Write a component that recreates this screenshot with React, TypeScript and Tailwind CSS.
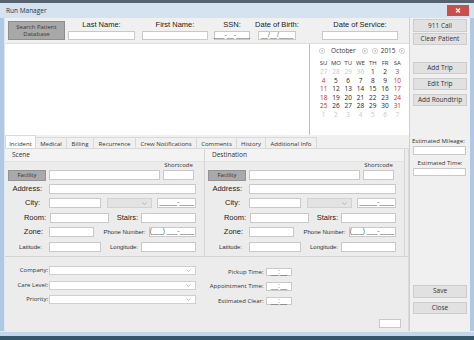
import React from "react";

const LS = "font-['Liberation_Sans',Arial,sans-serif]";
const OS = "font-['Open_Sans',sans-serif]";

function Input({ className = "", text }: { className?: string; text?: string }) {
  return (
    <div className={`bg-white border border-[#c9c9c9] flex items-start justify-center ${className}`}>
      {text ? <span className={`${LS} text-[6.5px] leading-[6px] text-[#555] whitespace-pre`}>{text}</span> : null}
    </div>
  );
}

function Chevron() {
  return (
    <svg width="5" height="3" viewBox="0 0 5 3">
      <path d="M0.5 0.5 L2.5 2.5 L4.5 0.5" stroke="#a8a8a8" fill="none" strokeWidth="0.8" />
    </svg>
  );
}

function Select({ className = "", disabled = false }: { className?: string; disabled?: boolean }) {
  return (
    <div
      className={`border flex items-center justify-end pr-[4px] ${disabled ? "bg-[#e3e3e3] border-[#d2d2d2]" : "bg-white border-[#cfcfcf]"} ${className}`}
    >
      <Chevron />
    </div>
  );
}

function Btn({ children, className = "" }: { children: React.ReactNode; className?: string }) {
  return (
    <div className={`bg-[#e1e1e1] border border-[#cdcdcd] flex items-center justify-center ${OS} text-[6.5px] text-[#333] ${className}`}>
      {children}
    </div>
  );
}

function Arrow({ dir }: { dir: "l" | "r" }) {
  return (
    <svg width="6" height="6" viewBox="0 0 6 6">
      <circle cx="3" cy="3" r="2.6" stroke="#b0b0b0" strokeWidth="0.6" fill="none" />
      {dir === "l" ? (
        <path d="M3.6 1.9 L2.2 3 L3.6 4.1 Z" fill="#888" />
      ) : (
        <path d="M2.4 1.9 L3.8 3 L2.4 4.1 Z" fill="#888" />
      )}
    </svg>
  );
}

function HeaderField({ label, className, text }: { label: string; className: string; text?: string }) {
  return (
    <div className={`flex flex-col items-center pt-[1px] ${className}`}>
      <div className={`${LS} text-[7.5px] leading-[11px] h-[11px] text-[#222] whitespace-nowrap`}>{label}</div>
      <Input className="mt-[1px] h-[9px] w-full" text={text} />
    </div>
  );
}

function Calendar() {
  const heads = ["SU", "MO", "TU", "WE", "TH", "FR", "SA"];
  const cells: { n: number; other: boolean; col: number }[] = [];
  for (let i = 0; i < 42; i++) {
    const col = i % 7;
    if (i < 4) cells.push({ n: 27 + i, other: true, col });
    else if (i - 3 <= 31) cells.push({ n: i - 3, other: false, col });
    else cells.push({ n: i - 3 - 31, other: true, col });
  }
  return (
    <div className={`w-[100px] bg-white border-l border-[#bdbdbd] flex flex-col ${OS}`}>
      <div className="mt-[3px] h-[8px] flex items-center text-[6.5px] text-[#333]">
        <div className="ml-[9px]"><Arrow dir="l" /></div>
        <span className="ml-[6px] leading-[8px]">October</span>
        <div className="ml-[6px]"><Arrow dir="r" /></div>
        <div className="ml-[4px]"><Arrow dir="l" /></div>
        <span className="ml-[3px] leading-[8px]">2015</span>
        <div className="ml-[3px]"><Arrow dir="r" /></div>
      </div>
      <div className="ml-[7.5px] mt-[2.5px] w-[86px] grid grid-cols-7">
        {heads.map((h) => (
          <div key={h} className="h-[10px] leading-[10px] text-center text-[6px] text-[#333]">{h}</div>
        ))}
      </div>
      <div className="ml-[7.5px] mt-[0.75px] w-[86px] grid grid-cols-7">
        {cells.map((c, i) => (
          <div
            key={i}
            className={`h-[8.5px] leading-[8.5px] text-center text-[6.5px] ${
              c.other ? "text-[#c8c8c8]" : c.col === 0 || c.col === 6 ? "text-[#c42b2b]" : "text-[#222]"
            }`}
          >
            {c.n}
          </div>
        ))}
      </div>
    </div>
  );
}

function Group({ title }: { title: string }) {
  const lbl = `${LS} text-[7.5px] leading-[10px] text-[#222] text-right whitespace-nowrap`;
  const sm = `${LS} text-[6px] leading-[10px] text-[#333] text-right whitespace-nowrap`;
  return (
    <div className="w-[200px] border-r border-[#d6d6d6] flex flex-col">
      <div className={`h-[13px] bg-[#f3f3f3] border-b border-[#e2e2e2] pl-[7px] ${OS} text-[6.5px] leading-[12px] text-[#333]`}>{title}</div>
      <div className="h-[7px] flex">
        <div className={`ml-[157px] w-[33px] text-center ${OS} text-[6px] leading-[7px] text-[#333]`}>Shortcode</div>
      </div>
      <div className="mt-[1px] h-[11px] flex items-start">
        <div className={`ml-[3px] w-[38px] h-[11px] bg-[#a9a9a9] border border-[#939393] flex items-center justify-center ${OS} text-[6px] text-[#333]`}>Facility</div>
        <Input className="ml-[3px] w-[111px] h-[10px]" />
        <Input className="ml-[3px] w-[31px] h-[10px]" />
      </div>
      <div className="mt-[2.5px] flex flex-col gap-[4.5px]">
        <div className="h-[10px] flex">
          <div className={`w-[44px] pr-[7px] ${lbl}`}>Address:</div>
          <Input className="w-[147px] h-[10px]" />
        </div>
        <div className="h-[10px] flex">
          <div className={`w-[44px] pr-[9px] ${lbl}`}>City:</div>
          <Input className="w-[52px] h-[10px]" />
          <Select disabled className="ml-[6px] w-[45px] h-[10px]" />
          <Input className="ml-[5px] w-[39px] h-[10px]" text="_____-____" />
        </div>
        <div className="h-[10px] flex">
          <div className={`w-[44px] pr-[3px] ${lbl}`}>Room:</div>
          <Input className="ml-[1px] w-[59px] h-[10px]" />
          <div className={`w-[32px] pr-[3px] ${lbl}`}>Stairs:</div>
          <Input className="w-[55px] h-[10px]" />
        </div>
        <div className="h-[10px] flex">
          <div className={`w-[44px] pr-[6px] ${lbl}`}>Zone:</div>
          <Input className="w-[45px] h-[10px]" />
          <div className={`w-[54.5px] pr-[3px] ${sm} text-[6.3px]`}>Phone Number:</div>
          <Input className="w-[47px] h-[10px]" text="(___) ___-____" />
        </div>
        <div className="h-[10px] flex">
          <div className={`w-[44px] pr-[7px] ${sm}`}>Latitude:</div>
          <Input className="w-[52px] h-[10px]" />
          <div className={`w-[40px] pr-[3px] ${sm}`}>Longitude:</div>
          <Input className="w-[55px] h-[10px]" />
        </div>
      </div>
    </div>
  );
}

export default function App() {
  const tabs: [string, string][] = [
    ["Incident", "w-[31px]"],
    ["Medical", "w-[31px]"],
    ["Billing", "w-[27px]"],
    ["Recurrence", "w-[42px]"],
    ["Crew Notifications", "w-[61px]"],
    ["Comments", "w-[40px]"],
    ["History", "w-[29px]"],
    ["Additional Info", "w-[51px]"],
  ];
  const bl = `${OS} text-[6px] leading-[9px] text-[#333] text-right whitespace-nowrap`;
  return (
    <div className="w-[474px] h-[340px] flex flex-col bg-[#b6cde7] overflow-hidden">
      <div className="h-[3px] bg-[#56636f]" />
      <div className="h-[15px] flex items-start justify-between bg-[#d5e2ef]">
        <span className={`ml-[6px] ${OS} text-[6.5px] leading-[15px] text-[#1f3550]`}>Run Manager</span>
        <div className="mt-[2px] mr-[5px] w-[22px] h-[11px] bg-[#c9504a] flex items-center justify-center">
          <svg width="6" height="5" viewBox="0 0 6 5">
            <path d="M1 0.5 L5 4.5 M5 0.5 L1 4.5" stroke="white" strokeWidth="1.3" />
          </svg>
        </div>
      </div>
      <div className="flex h-[313px]">
        <div className="w-[5px] bg-[#b0c8e4] border-r border-[#dbe7f4]" />
        <div className="w-[404px] flex flex-col bg-[#f0f0f0]">
          <div className="h-[26px] flex bg-[#f0f0f0] border-b border-[#dedede]">
            <div className="ml-[3px] mt-[3px] w-[57px] h-[19px] bg-[#a8a8a8] border border-[#8e8e8e] flex flex-col items-center justify-center">
              <span className={`${OS} text-[6px] leading-[7px] text-[#3a3a3a]`}>Search Patient</span>
              <span className={`${OS} text-[6px] leading-[7px] text-[#3a3a3a]`}>Database</span>
            </div>
            <HeaderField label="Last Name:" className="ml-[3px] w-[67px]" />
            <HeaderField label="First Name:" className="ml-[7px] w-[66px]" />
            <HeaderField label="SSN:" className="ml-[6px] w-[36px]" text="___-__-____" />
            <HeaderField label="Date of Birth:" className="ml-[8px] w-[38px]" text="__/__/____" />
            <HeaderField label="Date of Service:" className="ml-[26px] w-[76px]" />
          </div>
          <div className="h-[91px] flex">
            <div className="w-[304px] bg-white" />
            <Calendar />
          </div>
          <div className="h-[13px] flex items-end bg-[#f0f0f0]">
            {tabs.map(([t, w], i) => (
              <div
                key={t}
                className={`${w} flex items-start justify-center pt-[2px] border-r border-t border-[#d9d9d9] ${i === 0 ? "bg-white h-[13px] border-l" : "bg-[#f0f0f0] h-[11px]"}`}
              >
                <span className={`${OS} text-[6px] leading-[8px] text-[#333] whitespace-nowrap ${i === 0 ? "mt-[2px]" : ""}`}>{t}</span>
              </div>
            ))}
          </div>
          <div className="flex-1 flex flex-col bg-[#ececec] border-t border-r border-[#d9d9d9]">
            <div className="h-[108px] flex border-b border-[#d4d4d4]">
              <Group title="Scene" />
              <Group title="Destination" />
            </div>
            <div className="pt-[9px] flex">
              <div className="flex flex-col gap-[5.6px]">
                {["Company:", "Care Level:", "Priority:"].map((l) => (
                  <div key={l} className="h-[9px] flex">
                    <div className={`w-[44px] pr-[1px] ${bl}`}>{l}</div>
                    <Select className="w-[147px] h-[9px]" />
                  </div>
                ))}
              </div>
              <div className="mt-[1.7px] flex flex-col gap-[6px]">
                {["Pickup Time:", "Appointment Time:", "Estimated Clear:"].map((l) => (
                  <div key={l} className="h-[8.5px] flex">
                    <div className={`w-[70px] pr-[2.5px] ${bl} leading-[8.5px]`}>{l}</div>
                    <Input className="w-[26px] h-[8.5px]" text="__:__" />
                  </div>
                ))}
              </div>
            </div>
            <Input className="mt-[14px] ml-[374px] w-[22px] h-[8.5px]" />
          </div>
        </div>
        <div className="w-[61px] flex flex-col bg-[#f0f0f0] border-l border-[#cfcfcf] px-[3px]">
          <Btn className="mt-[1px] h-[13px]">911 Call</Btn>
          <Btn className="mt-[1px] h-[12px]">Clear Patient</Btn>
          <Btn className="mt-[17px] h-[12px]">Add Trip</Btn>
          <Btn className="mt-[3.5px] h-[12px]">Edit Trip</Btn>
          <Btn className="mt-[4.5px] h-[12px]">Add Roundtrip</Btn>
          <div className={`mt-[30.5px] h-[9px] ${OS} text-[6px] leading-[9px] text-[#333] whitespace-nowrap -ml-[1px]`}>Estimated Mileage:</div>
          <Input className="mt-[0.5px] h-[8.5px] w-[53px]" />
          <div className={`mt-[4px] h-[9px] ${OS} text-[6px] leading-[9px] text-[#333] text-center whitespace-nowrap`}>Estimated Time:</div>
          <Input className="h-[8.5px] w-[53px]" />
          <Btn className="mt-[109px] h-[12.5px]">Save</Btn>
          <Btn className="mt-[4px] h-[12.5px]">Close</Btn>
        </div>
        <div className="w-[4px] bg-[#b0c8e4]" />
      </div>
      <div className="h-[5px] bg-[#c3d6ec] border-t border-[#e4edf7]" />
      <div className="h-[4px] bg-[#35566b]" />
    </div>
  );
}
